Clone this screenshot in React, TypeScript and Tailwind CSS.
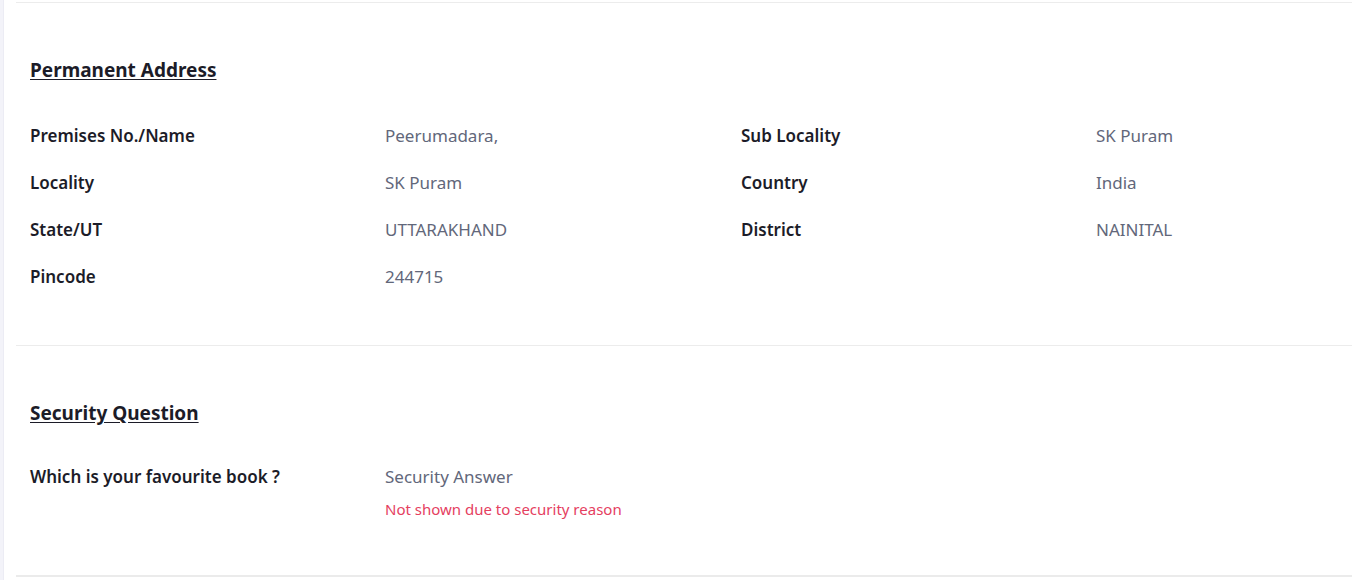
const permanent = [
  ['Premises No./Name', 'Peerumadara,', 'Sub Locality', 'SK Puram'],
  ['Locality', 'SK Puram', 'Country', 'India'],
  ['State/UT', 'UTTARAKHAND', 'District', 'NAINITAL'],
  ['Pincode', '244715'],
]

function Row({ cells }: { cells: string[] }) {
  return (
    <div className="grid grid-cols-[355px_356px_355px_1fr] h-[47px]">
      {cells.map((c, i) => (
        <div
          key={i}
          className={
            i % 2 === 0
              ? 'text-[17px] leading-6 font-semibold text-[#1c1c28]'
              : 'text-[17px] leading-6 text-[#62677a]'
          }
        >
          {c}
        </div>
      ))}
    </div>
  )
}

export default function App() {
  return (
    <div className="flex min-h-[580px] bg-white font-['Noto_Sans',sans-serif]">
      <div className="w-[4px] shrink-0 bg-[#f3f3f9] border-r border-[#ececf4]" />
      <main className="flex-1 pl-3 pt-[2px]">
        {/* Permanent Address */}
        <section className="border-t border-[#ececec] px-[14px] pt-[53px] pb-[33px]">
          <h2 className="text-[19px] leading-7 font-bold text-[#1c1c28] underline underline-offset-2">
            Permanent Address
          </h2>
          <div className="mt-[40px]">
            {permanent.map((r, i) => (
              <Row key={i} cells={r} />
            ))}
          </div>
        </section>

        {/* Security Question */}
        <section className="border-t border-[#ececec] px-[14px] pt-[53px] pb-[56px]">
          <h2 className="text-[19px] leading-7 font-bold text-[#1c1c28] underline underline-offset-2">
            Security Question
          </h2>
          <div className="mt-[38px] grid grid-cols-[355px_1fr]">
            <div className="text-[17px] leading-6 font-semibold text-[#1c1c28]">
              Which is your favourite book ?
            </div>
            <div>
              <div className="text-[17px] leading-6 text-[#62677a]">Security Answer</div>
              <div className="mt-[10px] text-[15px] leading-5 text-[#e5405f]">
                Not shown due to security reason
              </div>
            </div>
          </div>
        </section>
        <div className="border-t-2 border-[#ebebeb]" />
      </main>
    </div>
  )
}
